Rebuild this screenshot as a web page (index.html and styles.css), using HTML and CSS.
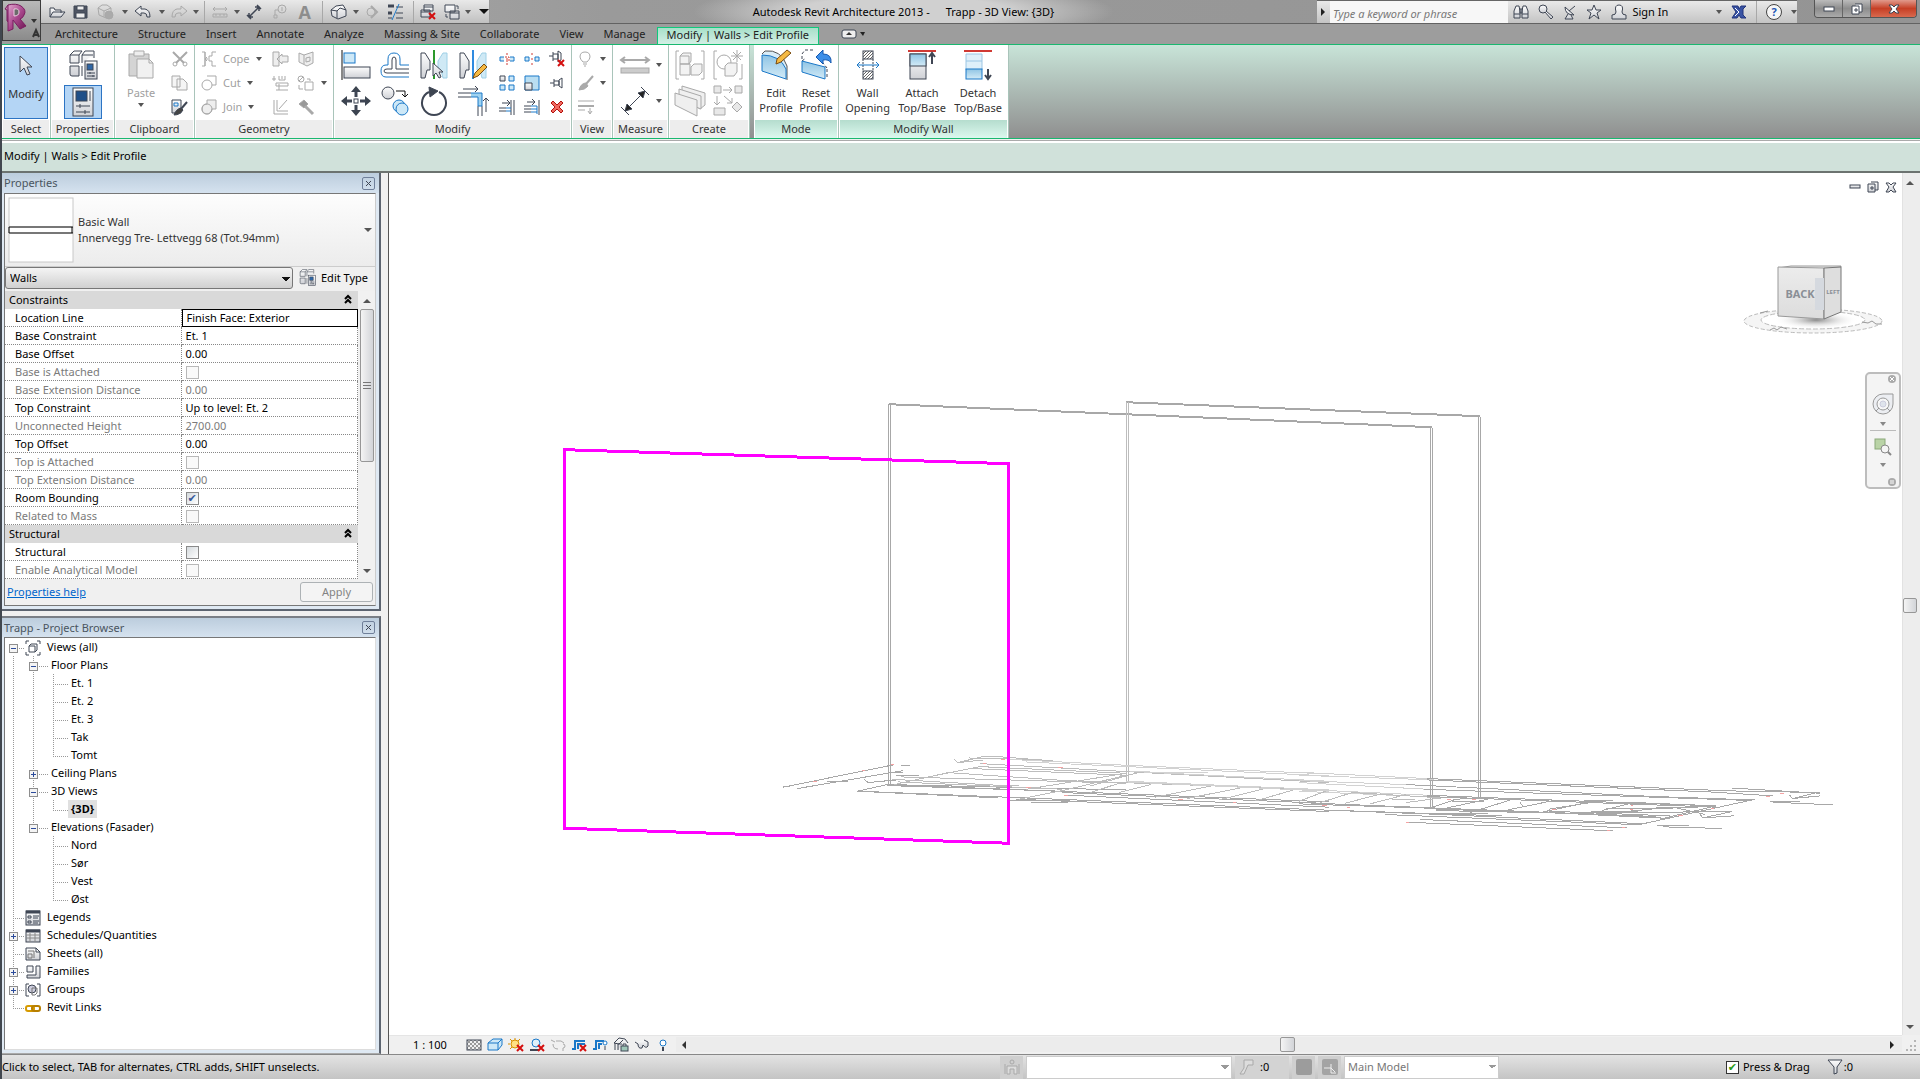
FILE: index.html
```html
<!DOCTYPE html>
<html lang="en">
<head>
<meta charset="utf-8">
<title>Autodesk Revit Architecture 2013 - Trapp - 3D View: {3D}</title>
<link rel="stylesheet" href="styles.css">
</head>
<body>
<svg class="defs" width="0" height="0" aria-hidden="true">
  <defs>
    <linearGradient id="face" x1="0" y1="0" x2="0" y2="1"><stop offset="0" stop-color="#ececec"/><stop offset="1" stop-color="#dcdcdc"/></linearGradient>
    <linearGradient id="glass" x1="0" y1="0" x2="0" y2="1"><stop offset="0" stop-color="#8fc4e4"/><stop offset="1" stop-color="#d3ebf7"/></linearGradient>
    <linearGradient id="metal" x1="0" y1="0" x2="0" y2="1"><stop offset="0" stop-color="#fdfdfd"/><stop offset="1" stop-color="#cfd1d6"/></linearGradient>
    <linearGradient id="rlogo" x1="0" y1="0" x2="1" y2="1"><stop offset="0" stop-color="#e2a6cf"/><stop offset=".5" stop-color="#a8478c"/><stop offset="1" stop-color="#6a1450"/></linearGradient>
    <radialGradient id="shade"><stop offset="0" stop-color="#8a8a8a"/><stop offset="1" stop-color="#fff" stop-opacity="0"/></radialGradient>
    <pattern id="hatch" width="3" height="3" patternUnits="userSpaceOnUse"><path d="M0 3L3 0" stroke="#666" stroke-width="1"/></pattern>
    <pattern id="check" width="4" height="4" patternUnits="userSpaceOnUse"><path d="M0 0h2v2h-2zM2 2h2v2h-2z" fill="#9a9a9a" stroke="none"/></pattern>
    <symbol id="cubes" viewBox="0 0 30 30">
      <path class="m" d="M2 5l4-4h8l-3 4v8H2zM14 5l3-4h9v7M14 13V5h11M2 5h9M2 16h9v10H4q-2 0-2-2zM14 16v10"/>
      <rect class="m" x="17" y="11" width="12" height="18"/><rect x="19" y="14" width="6" height="6" fill="#2f66a5"/><path d="M19 23h8M19 26h8M22 22v2M25 25v2"/>
    </symbol>
    <symbol id="redx" viewBox="0 0 8 8"><path class="r" d="M1 1l6 6M7 1L1 7"/></symbol>
  </defs>
</svg>
<div class="app">
<header class="top">
  <button class="appmenu" aria-label="Application menu">
    <svg width="38" height="40" viewBox="0 0 38 40"><path d="M2 8L5 4l4 2v17l-5-3V9z" fill="url(#rlogo)" stroke="#7b1d60"/><path d="M5 4q8-2 13 1 6 4 3 9-1 3-4 4l6 7-6 3-7-9v9l-5 2V8z" fill="url(#rlogo)" stroke="#7b1d60"/><path d="M11 8q5-1 5 3 0 4-5 4z" fill="#6b6b6b" stroke="#f0cde5"/><path d="M28 18h6l-3 4z" fill="#333" stroke="none"/><path d="M30 36l3-7 3 7M31 34h4" stroke="#333" stroke-width="2"/></svg>
  </button>
  <div class="titlebar">
    <div class="qat">
      <button class="w32" aria-label="Open"><svg width="18" height="14" viewBox="0 0 18 14"><path class="m" d="M2 12V3h4l1 2h6v3M2 12l3-5h12l-4 5z"/></svg></button>
      <button class="w20" aria-label="Save"><svg width="16" height="14" viewBox="0 0 16 14"><path d="M1 1h13v12H1z" fill="#4f5563"/><path d="M4 1h7v4H4z" fill="#eee"/><path d="M3 8h9v5H3z" fill="#eee"/></svg></button>
      <button class="w32 g" aria-label="Synchronize"><svg width="18" height="16" viewBox="0 0 18 16"><path d="M1 4l4-3h5l4 3v7l-5 3-7-3zM1 4l6 3 7-3M7 7v6"/><circle cx="12" cy="11" r="4" fill="#aaa"/></svg></button><i class="caret"></i>
      <button class="w32" aria-label="Undo"><svg width="18" height="14" viewBox="0 0 18 14"><path class="m" d="M1 6l6-5v3h4q5 1 5 8h-3q0-4-3-4H7v3z"/></svg></button><i class="caret"></i>
      <button class="w28 g" aria-label="Redo"><svg width="18" height="14" viewBox="0 0 18 14"><path d="M17 6l-6-5v3H7q-5 1-5 8h3q0-4 3-4h3v3z"/></svg></button><i class="caret"></i><i class="sep"></i>
      <button class="w28 g" aria-label="Measure"><svg width="16" height="12" viewBox="0 0 16 12"><path d="M1 3h14M3 1L1 3l2 2M13 1l2 2-2 2M1 8h14v3H1zM4 8v2M8 8v2M12 8v2"/></svg></button><i class="caret"></i>
      <button class="w28" aria-label="Aligned dimension"><svg width="16" height="16" viewBox="0 0 16 16"><path d="M3 13L13 3M1 11l4 4M11 1l4 4M3 9v4h4M9 3h4v4" stroke-width="1.5"/></svg></button>
      <button class="w24 g" aria-label="Tag"><svg width="15" height="15" viewBox="0 0 15 15"><circle cx="9" cy="5" r="4"/><path d="M9 3v4M5 6H2v5M1 11h3v3H1z"/></svg></button>
      <button class="w24 big-a" aria-label="Text">A</button><i class="sep"></i>
      <button class="w28" aria-label="Default 3D view"><svg width="17" height="16" viewBox="0 0 17 16"><path class="m" d="M1 6l5-4 7-1 3 5v6l-8 3-6-3zM1 6l6 1 3-3 6 2M7 7v7"/></svg></button><i class="caret"></i>
      <button class="w24 g" aria-label="Section"><svg width="14" height="14" viewBox="0 0 14 14"><circle cx="7" cy="7" r="4"/><path d="M7 1l6 6-6 6" stroke-width="2"/></svg></button>
      <button class="w24" aria-label="Thin lines"><svg width="17" height="16" viewBox="0 0 17 16"><path d="M1 2h6M1 9h4" stroke-width="3"/><path d="M1 14h4M9 3h7M9 9h7M9 14h7"/><path class="b" d="M12 0L5 16"/></svg></button><i class="sep"></i>
      <button class="w24" aria-label="Close hidden windows"><svg width="16" height="16" viewBox="0 0 16 16"><path class="m" d="M4 1h9v6H4zM1 6h9v7H1zM4 3h9M1 8h9"/><use href="#redx" x="8" y="8" width="8" height="8"/></svg></button>
      <button class="w24" aria-label="Switch windows"><svg width="17" height="16" viewBox="0 0 17 16"><path class="m" d="M1 1h10v7H1zM6 7h9v8H6zM6 9h9M14 5V2h-2M2 10v3h2"/></svg></button><i class="caret"></i>
      <i class="caret dark"></i>
    </div>
    <h1 class="title"><span>Autodesk Revit Architecture 2013 -</span><span>Trapp - 3D View: {3D}</span></h1>
    <div class="info">
      <i class="tri-r"></i>
      <input class="search" type="text" placeholder="Type a keyword or phrase" aria-label="Search">
      <button aria-label="Find"><svg width="16" height="16" viewBox="0 0 16 16"><path class="m" d="M3 2h3l1 5v7H1V7zM10 2h3l2 5v7H9V7zM7 5h2v4H7zM1 10h6M9 10h6"/></svg></button>
      <button aria-label="Key"><svg width="16" height="16" viewBox="0 0 16 16"><circle class="m" cx="5" cy="5" r="4"/><path class="m" d="M7 8l6 7 2-2-7-6"/></svg></button>
      <button aria-label="Communication center"><svg width="14" height="16" viewBox="0 0 14 16"><path class="m" d="M2 3q0 8 9 8zM6 7l6-5M5 10l-3 5h8l-2-4"/></svg></button>
      <button aria-label="Favorites"><svg width="16" height="16" viewBox="0 0 16 16"><path class="m" d="M8 1l2 5h5l-4 3 2 6-5-4-5 4 2-6-4-3h5z"/></svg></button>
      <button class="signin"><svg width="16" height="16" viewBox="0 0 16 16"><path class="m" d="M5 8Q3 1 8 1t3 7q0 3 4 3v4H1v-4q4 0 4-3z"/></svg><span>Sign In</span><i class="caret"></i></button>
      <button aria-label="Exchange apps"><svg width="16" height="14" viewBox="0 0 16 14"><path d="M1 1h6l1 3 2-3h5l-3 3v6l3 3h-5l-2-3-2 3H1l4-6z" fill="#3953a4" stroke="#22357c"/><path d="M4 3l4 4-4 4" stroke="#fff"/></svg></button>
      <i class="sep"></i>
      <button class="help" aria-label="Help">?</button><i class="caret"></i>
    </div>
    <div class="winbtns">
      <button aria-label="Minimize"><svg width="12" height="6" viewBox="0 0 12 6"><rect x="1" y="1" width="10" height="4" fill="#fff"/></svg></button>
      <button aria-label="Restore"><svg width="12" height="12" viewBox="0 0 12 12"><path d="M4 1h7v8H8M1 3h7v8H1zM4 6h2v2H4z" fill="#fff"/></svg></button>
      <button class="close" aria-label="Close"><svg width="12" height="10" viewBox="0 0 12 10"><path d="M1 1h3l2 2 2-2h3L8 5l3 4H8L6 7 4 9H1l3-4z" fill="#fff"/></svg></button>
    </div>
  </div>
  <nav class="tabs">
    <a href="#">Architecture</a><a href="#">Structure</a><a href="#">Insert</a><a href="#">Annotate</a><a href="#">Analyze</a><a href="#">Massing &amp; Site</a><a href="#">Collaborate</a><a href="#">View</a><a href="#">Manage</a><a href="#" class="active">Modify | Walls &gt; Edit Profile</a>
    <button class="mini" aria-label="Minimize ribbon"><svg width="26" height="10" viewBox="0 0 26 10"><rect x="1" y="1" width="14" height="8" rx="2" fill="#eee"/><path d="M5 6l3-3 3 3z" fill="#333" stroke="none"/><path d="M19 3h5l-2 4z" fill="#222" stroke="none"/></svg></button>
  </nav>
</header>

<section class="ribbon">
  <div class="panel p-select"><div class="body"><button class="tool on tall"><svg width="14" height="22" viewBox="0 0 14 22"><path class="m" d="M1 1v16l4-4 3 7 3-1-3-7h5z"/></svg><span>Modify</span></button></div><h2>Select</h2></div>
  <div class="panel p-prop"><div class="body two">
    <button aria-label="Type properties"><svg width="30" height="30"><use href="#cubes"/></svg></button>
    <button class="on" aria-label="Properties"><svg width="22" height="30" viewBox="0 0 22 30"><rect class="m" x="1" y="1" width="20" height="28"/><rect x="4" y="4" width="11" height="10" fill="#1f4f88"/><path d="M18 4v10M4 19h14M4 25h14M8 17v4M13 23v4"/></svg></button></div><h2>Properties</h2></div>
  <div class="panel p-clip g"><div class="body">
    <button class="tool"><svg width="26" height="32" viewBox="0 0 26 32"><path d="M1 5h20v22H1z" fill="#d4d4d4"/><path d="M6 2h10v5H6z" fill="#eee"/><path d="M9 10h12l4 4v15H9z" fill="#f1f1f1"/><path d="M21 10v4h4"/></svg><span>Paste</span><i class="caret"></i></button>
    <div class="col3">
      <button aria-label="Cut"><svg width="16" height="16" viewBox="0 0 16 16"><path d="M1 1l11 11M15 1L4 12" stroke-width="2"/><circle cx="3" cy="13" r="2"/><circle cx="13" cy="13" r="2"/></svg></button>
      <button aria-label="Copy"><svg width="17" height="16" viewBox="0 0 17 16"><path d="M1 1h8v11H1zM6 4h6l4 4v7H6z" fill="#f5f5f5"/></svg></button>
      <button aria-label="Match type"><svg class="dk" width="17" height="17" viewBox="0 0 17 17"><path class="m" d="M1 1h9v13H1z"/><path class="b" d="M3 4h4v3H3z"/><path d="M16 3l-6 7" stroke-width="2"/><path d="M10 9q-5 1-7 7 6 0 9-5z" fill="#444"/></svg></button>
    </div></div><h2>Clipboard</h2></div>
  <div class="panel p-geo g"><div class="body">
    <div class="col3 left">
      <button><svg width="16" height="16" viewBox="0 0 16 16"><path d="M1 1h3v14H1M4 1v14M15 1h-4v4H8v5h3v5h4M7 8H4l2-2M4 8l2 2"/></svg><span>Cope</span><i class="caret"></i></button>
      <button><svg width="16" height="16" viewBox="0 0 16 16"><path d="M6 1h9v9h-4"/><circle cx="6" cy="10" r="5"/></svg><span>Cut</span><i class="caret"></i></button>
      <button><svg width="16" height="16" viewBox="0 0 16 16"><path d="M6 1h9v9h-4q-1 5-5 5-5 0-5-5t5-5z" fill="#eee"/><circle cx="6" cy="10" r="5"/></svg><span>Join</span><i class="caret"></i></button>
    </div>
    <div class="grid6">
      <button aria-label="Unjoin"><svg width="17" height="16" viewBox="0 0 17 16"><path d="M1 1h6v14H1zM16 5h-6V3L5 8l5 5v-2h6z" fill="#eee"/></svg></button>
      <button aria-label="Wall joins"><svg width="16" height="16" viewBox="0 0 16 16"><path d="M1 2l5 2 9-3v11l-6 3-8-4zM6 4v9M8 7l4-1v4l-4 1z" fill="#eee"/></svg></button>
      <button aria-label="Beam joins"><svg width="17" height="16" viewBox="0 0 17 16"><path d="M2 1v5M0 4h4M7 1v4h6V1M10 1v3M4 8h12v3H4zM4 15h12M7 9v6"/></svg></button>
      <button aria-label="Split face"><svg width="17" height="16" viewBox="0 0 17 16"><circle cx="4" cy="4" r="3"/><path d="M2 6l4-4M8 7h8v8H8zM2 10v4h4M10 4h3v2"/></svg></button>
      <button aria-label="Trim"><svg width="17" height="16" viewBox="0 0 17 16"><path d="M2 1v14h14M5 1v11h11M7 10l8-9"/></svg></button>
      <button aria-label="Demolish"><svg width="16" height="16" viewBox="0 0 16 16"><path d="M1 5l5-4 4 4-4 4z" fill="#999"/><path d="M7 7l8 8" stroke-width="3"/></svg></button>
    </div><i class="caret"></i></div><h2>Geometry</h2></div>
  <div class="panel p-mod"><div class="body">
    <div class="grid8">
      <button aria-label="Align"><svg width="30" height="30" viewBox="0 0 30 30"><path d="M1 0v30" stroke="#111"/><rect x="3" y="3" width="11" height="10" fill="#cde8f7" class="b"/><rect class="m" x="3" y="17" width="26" height="11"/></svg></button>
      <button aria-label="Offset"><svg width="30" height="28" viewBox="0 0 30 28"><path class="b" d="M29 14h-9V8q0-6-6-6T8 8v6H6q-5 0-5 6t5 6h23"/><path d="M29 18h-13V9q0-3-2-3t-2 3v9H7q-3 0-3 2t3 2h22"/></svg></button>
      <button aria-label="Mirror pick axis"><svg width="28" height="30" viewBox="0 0 28 30"><path class="m" d="M1 3h4l5 8v9H7l-2 8H1z"/><path d="M27 3h-4l-5 8v9h3l2 8h4z" fill="#cfe9f5" stroke="#9fd0e6"/><path d="M14 0v29" stroke="#2c9a2c" stroke-width="2"/><path class="m" d="M13 13v13l3-3 3 5 2-1-2-5h4z"/></svg></button>
      <button aria-label="Mirror draw axis"><svg width="28" height="30" viewBox="0 0 28 30"><path class="m" d="M1 3h4l5 8v9H7l-2 8H1z"/><path d="M27 3h-4l-5 8v9h3l2 8h4z" fill="#cfe9f5" stroke="#9fd0e6"/><path d="M14 0v29" stroke="#2f8be0" stroke-width="2"/><path d="M14 28l2-5 9-9 3 3-9 9z" fill="#f5b942" stroke="#7a4b10"/></svg></button>
      <button aria-label="Move"><svg width="30" height="30" viewBox="0 0 30 30"><path d="M15 0l5 6H10zM15 30l-5-6h10zM0 15l6-5v10zM30 15l-6 5V10z" fill="#3c4450" stroke="none"/><path d="M15 5v6M15 19v6M5 15h6M19 15h6" stroke-width="3"/><rect x="13" y="13" width="4" height="4"/></svg></button>
      <button aria-label="Copy element"><svg width="28" height="30" viewBox="0 0 28 30"><circle class="m" cx="7" cy="7" r="6"/><path d="M15 5h9v6M21 8l3 3 3-3" stroke="#111"/><circle class="b" cx="18" cy="20" r="6" fill="#cde8f7"/><circle class="b" cx="21" cy="23" r="6" fill="#cde8f7"/></svg></button>
      <button aria-label="Rotate"><svg width="28" height="30" viewBox="0 0 28 30"><path d="M19 6A12 12 0 1 1 9 6" stroke-width="2"/><path d="M9 1l9 4-8 6z" fill="#3c4450"/></svg></button>
      <button aria-label="Trim extend"><svg width="30" height="30" viewBox="0 0 30 30"><path d="M5 3h15M17 0l3 3-3 3M0 7h13M0 11h13M28 26V12M25 15l3-3 3 3M20 20v10M24 20v10"/><path class="b" d="M13 7h11v13h-4v-9h-7" fill="#9fd2ef"/></svg></button>
    </div>
    <div class="grid9">
      <button aria-label="Split element"><svg width="16" height="12" viewBox="0 0 16 12"><path class="b" d="M5 4H1v4h4M11 4h4v4h-4" fill="#cde8f7"/><path class="rr" d="M6 4h4v4H6M8 0v2M8 5v2M8 10v2" stroke-dasharray="2 1"/></svg></button>
      <button aria-label="Split with gap"><svg width="16" height="12" viewBox="0 0 16 12"><path class="b" d="M1 4h4v4H1zM11 4h4v4h-4z" fill="#cde8f7"/><path class="rr" d="M8 0v2M8 5v2M8 10v2"/></svg></button>
      <button aria-label="Unpin"><svg width="16" height="16" viewBox="0 0 16 16"><path d="M0 5h4M4 1v9M4 3h5v5H4M9 0l3 2v7l-3 2z"/><use href="#redx" x="8" y="8" width="8" height="8"/></svg></button>
      <button aria-label="Array"><svg width="16" height="16" viewBox="0 0 16 16"><path class="m" d="M1 1h5v5H1z"/><path class="b" d="M10 1h5v5h-5zM1 10h5v5H1zM10 10h5v5h-5z" fill="#cde8f7"/></svg></button>
      <button aria-label="Scale"><svg width="16" height="16" viewBox="0 0 16 16"><path class="b" d="M1 1h14v14H1z" fill="#b9def2"/><path class="m" d="M1 8h7v7H1z"/></svg></button>
      <button aria-label="Pin"><svg width="14" height="12" viewBox="0 0 14 12"><path d="M0 6h4M4 2v8M4 4h5v4H4M9 3l3-2v10l-3-2z"/></svg></button>
      <button aria-label="Trim single"><svg width="16" height="16" viewBox="0 0 16 16"><path d="M3 4h7M8 1l3 3-3 3M0 9h7M0 12h7M12 1v15M15 1v15"/><path class="b" d="M7 9h5M7 12h5"/></svg></button>
      <button aria-label="Trim multiple"><svg width="16" height="16" viewBox="0 0 16 16"><path d="M3 3h7M8 0l3 3-3 3M0 7h7M0 10h7M0 13h7M15 1v15"/><path class="b" d="M7 7h6v8M7 10h6M7 13h6"/></svg></button>
      <button aria-label="Delete"><svg width="14" height="14" viewBox="0 0 14 14"><path d="M1 3l2-2 4 4 4-4 2 2-4 4 4 4-2 2-4-4-4 4-2-2 4-4z" fill="#f06a62" stroke="#b3120c"/></svg></button>
    </div></div><h2>Modify</h2></div>
  <div class="panel p-view g"><div class="body"><div class="col3 left">
      <button aria-label="Hide"><svg width="16" height="16" viewBox="0 0 16 16"><path d="M5 11q-3-3-3-5 0-5 5-5t5 5q0 2-3 5zM5 13h4M6 15h2"/></svg><i class="caret"></i></button>
      <button aria-label="Override"><svg width="16" height="16" viewBox="0 0 16 16"><path d="M15 1L8 9" stroke-width="2"/><path d="M8 8q-5 0-7 7 6 0 9-4z" fill="#aaa"/></svg><i class="caret"></i></button>
      <button aria-label="Linework"><svg width="16" height="16" viewBox="0 0 16 16"><path d="M0 2h16"/><path d="M0 7h16" stroke-width="2"/><path d="M0 11h7M12 9v5M10 12l2 3 2-3"/></svg></button>
    </div></div><h2>View</h2></div>
  <div class="panel p-meas"><div class="body two"><button class="g" aria-label="Measure"><svg width="30" height="18" viewBox="0 0 30 18"><path d="M1 4h28M5 1L1 4l4 3M25 1l4 3-4 3" stroke-width="2"/><rect x="1" y="12" width="28" height="5" fill="#ccc"/></svg><i class="caret"></i></button>
    <button aria-label="Dimension"><svg width="30" height="30" viewBox="0 0 30 30"><path d="M5 25L25 5M1 21l8 8M21 1l8 8"/><path d="M5 25l2-7 5 5zM25 5l-2 7-5-5z" fill="#222"/></svg><i class="caret"></i></button></div><h2>Measure</h2></div>
  <div class="panel p-create g"><div class="body four">
      <button aria-label="Create assembly"><svg width="30" height="30" viewBox="0 0 30 30"><path d="M4 1H1v28h3M26 1h3v28h-3"/><path d="M5 6l3-3h8v8l-2 3H5zM5 14h10v11H5zM16 17l3-3h8v8l-3 3h-8zM5 6h9v8" fill="#f3f3f3"/></svg></button>
      <button aria-label="Create group"><svg width="30" height="30" viewBox="0 0 30 30"><path d="M4 1H1v28h3M29 14v15h-3"/><circle cx="11" cy="12" r="7"/><path d="M12 16l3-3h9v9l-3 4h-9z" fill="#f3f3f3"/><path d="M24 0v12M18 6h12M20 2l8 8M28 2l-8 8"/></svg></button>
      <button aria-label="Create parts"><svg width="32" height="32" viewBox="0 0 32 32"><path d="M8 12V1l23 7v12l-5 4z" fill="#efefef"/><path d="M5 15V4l22 7v13z" fill="#efefef"/><path d="M1 20V8l22 7v16z" fill="#efefef"/></svg></button>
      <button aria-label="Create similar"><svg width="30" height="32" viewBox="0 0 30 32"><path d="M1 1h7v7H1zM22 1h7v7h-7zM1 23h11v7H1zM24 17l5 5-5 5-5-5z" fill="#e8e8e8"/><path d="M10 5h9M16 2l3 3-3 3M4 11v9M1 17l3 3 3-3M11 11l8 7M19 13v5h-5"/></svg></button>
    </div><h2>Create</h2></div>
  <div class="panel p-mode ctx"><div class="body row">
    <button class="tool"><svg width="30" height="32" viewBox="0 0 30 32"><path d="M1 5l3-3q16-2 22 15v14" fill="#d9ecf6" stroke="#555"/><path class="b" d="M1 6q18 0 24 14v10L1 22z" fill="url(#glass)"/><path d="M15 15l1-5L26 1l4 3-10 9z" fill="#f5b942" stroke="#7a4b10"/></svg><span>Edit<br>Profile</span></button>
    <button class="tool"><svg width="30" height="32" viewBox="0 0 30 32"><path d="M1 10V5l3-4h10M1 12l4-3M18 9l8 10M26 20v10" stroke-dasharray="3 2"/><path class="b" d="M1 12l23 6v12L1 23z" fill="url(#glass)"/><path d="M15 8l7-7v4q9 0 8 9-2-4-8-3v4z" fill="#3d8fe8" stroke="#1559b0"/></svg><span>Reset<br>Profile</span></button>
  </div><h2>Mode</h2></div>
  <div class="panel p-wall ctx"><div class="body row">
    <button class="tool"><svg width="24" height="32" viewBox="0 0 24 32"><rect x="7" y="2" width="10" height="8" fill="url(#hatch)"/><rect x="7" y="22" width="10" height="8" fill="url(#hatch)"/><path d="M7 10v12M17 10v12" stroke-dasharray="2 1"/><path class="b" d="M1 16h22M4 13l-3 3 3 3M20 13l3 3-3 3"/></svg><span>Wall<br>Opening</span></button>
    <button class="tool"><svg width="28" height="32" viewBox="0 0 28 32"><path class="rr" d="M0 2h28" stroke-width="2"/><rect class="m" x="2" y="5" width="16" height="25"/><rect x="2" y="5" width="16" height="12" fill="url(#glass)"/><path d="M24 15V5M21 8l3-4 3 4" stroke-width="2"/></svg><span>Attach<br>Top/Base</span></button>
    <button class="tool"><svg width="28" height="32" viewBox="0 0 28 32"><path class="rr" d="M0 2h28" stroke-width="2"/><path d="M2 5h16v16H2zM2 12h16" fill="#dff0fa" stroke="#9cc6e4"/><rect class="b" x="2" y="20" width="16" height="10" fill="url(#glass)"/><path d="M24 20v9M21 26l3 4 3-4" stroke-width="2"/></svg><span>Detach<br>Top/Base</span></button>
  </div><h2>Modify Wall</h2></div>
</section>
<div class="options">Modify | Walls &gt; Edit Profile</div>

<main class="work">
  <aside class="dock">
    <section class="pane props">
      <h2>Properties<button class="x" aria-label="Close properties"><svg width="7" height="7" viewBox="0 0 7 7"><path d="M1 1l5 5M6 1L1 6"/></svg></button></h2>
      <div class="inner">
        <button class="type"><svg width="66" height="66" viewBox="0 0 66 66"><rect x="1" y="1" width="64" height="64" fill="#fff" stroke="#c8c8c8"/><rect x="2" y="30" width="62" height="6" fill="#fff" stroke="none"/><path d="M1 30h64M1 36h64" stroke="#777" stroke-width="2"/><path d="M1 30v6M64 30v6" stroke="#000"/></svg><span>Basic Wall<br>Innervegg Tre- Lettvegg 68 (Tot.94mm)</span><i class="caret big"></i></button>
        <div class="filter"><select aria-label="Element filter"><option>Walls</option></select><button><svg width="17" height="17"><use href="#cubes"/></svg>Edit Type</button></div>
        <div class="scroller">
          <table>
            <tr class="grp"><th colspan="2">Constraints<svg width="8" height="10" viewBox="0 0 8 10"><path d="M1 4l3-3 3 3M1 8l3-3 3 3"/></svg></th></tr>
            <tr><th>Location Line</th><td class="sel">Finish Face: Exterior</td></tr>
            <tr><th>Base Constraint</th><td>Et. 1</td></tr>
            <tr><th>Base Offset</th><td>0.00</td></tr>
            <tr class="off"><th><label for="c1">Base is Attached</label></th><td><input id="c1" type="checkbox" disabled></td></tr>
            <tr class="off"><th>Base Extension Distance</th><td>0.00</td></tr>
            <tr><th>Top Constraint</th><td>Up to level: Et. 2</td></tr>
            <tr class="off"><th>Unconnected Height</th><td>2700.00</td></tr>
            <tr><th>Top Offset</th><td>0.00</td></tr>
            <tr class="off"><th><label for="c2">Top is Attached</label></th><td><input id="c2" type="checkbox" disabled></td></tr>
            <tr class="off"><th>Top Extension Distance</th><td>0.00</td></tr>
            <tr><th><label for="c3">Room Bounding</label></th><td><input id="c3" type="checkbox" checked></td></tr>
            <tr class="off"><th><label for="c4">Related to Mass</label></th><td><input id="c4" type="checkbox" disabled></td></tr>
            <tr class="grp"><th colspan="2">Structural<svg width="8" height="10" viewBox="0 0 8 10"><path d="M1 4l3-3 3 3M1 8l3-3 3 3"/></svg></th></tr>
            <tr><th><label for="c5">Structural</label></th><td><input id="c5" type="checkbox"></td></tr>
            <tr class="off"><th><label for="c6">Enable Analytical Model</label></th><td><input id="c6" type="checkbox" disabled></td></tr>
          </table>
          <div class="vbar"><i class="tri-u"></i><div class="thumb"></div><i class="tri-d"></i></div>
        </div>
        <div class="foot"><a href="#">Properties help</a><button disabled>Apply</button></div>
      </div>
    </section>
    <section class="pane browser">
      <h2>Trapp - Project Browser<button class="x" aria-label="Close browser"><svg width="7" height="7" viewBox="0 0 7 7"><path d="M1 1l5 5M6 1L1 6"/></svg></button></h2>
      <ul class="tree">
        <li><i class="c first"><b></b></i><svg width="16" height="16" viewBox="0 0 16 16"><path d="M4 1H1v3M12 1h3v3M4 15H1v-3M12 15h3v-3M4 6l2-2h6v6l-2 2H4zM4 6h6v6"/></svg><span>Views (all)</span></li>
        <li><i class="c v"></i><i class="c t w"><b></b></i><span>Floor Plans</span></li>
        <li><i class="c v"></i><i class="c v"></i><i class="c t w"></i><span>Et. 1</span></li>
        <li><i class="c v"></i><i class="c v"></i><i class="c t w"></i><span>Et. 2</span></li>
        <li><i class="c v"></i><i class="c v"></i><i class="c t w"></i><span>Et. 3</span></li>
        <li><i class="c v"></i><i class="c v"></i><i class="c t w"></i><span>Tak</span></li>
        <li><i class="c v"></i><i class="c v"></i><i class="c l w"></i><span>Tomt</span></li>
        <li><i class="c v"></i><i class="c t w"><b class="plus"></b></i><span>Ceiling Plans</span></li>
        <li><i class="c v"></i><i class="c t w"><b></b></i><span>3D Views</span></li>
        <li><i class="c v"></i><i class="c v"></i><i class="c l w"></i><span class="cur">{3D}</span></li>
        <li><i class="c v"></i><i class="c l w"><b></b></i><span>Elevations (Fasader)</span></li>
        <li><i class="c v"></i><i class="c"></i><i class="c t w"></i><span>Nord</span></li>
        <li><i class="c v"></i><i class="c"></i><i class="c t w"></i><span>Sør</span></li>
        <li><i class="c v"></i><i class="c"></i><i class="c t w"></i><span>Vest</span></li>
        <li><i class="c v"></i><i class="c"></i><i class="c l w"></i><span>Øst</span></li>
        <li><i class="c t"></i><svg width="16" height="16" viewBox="0 0 16 16"><rect class="m" x="1" y="1" width="14" height="14"/><path d="M1 2h14" stroke-width="3"/><path d="M3 6h3v2H3zM3 11h3v2H3zM8 6h6M8 8h5M8 11h6M8 13h5"/></svg><span>Legends</span></li>
        <li><i class="c t"><b class="plus"></b></i><svg width="16" height="16" viewBox="0 0 16 16"><rect class="m" x="1" y="2" width="14" height="12"/><path d="M1 3h14" stroke-width="3"/><path d="M1 7h14M1 10h14M5 5v9M10 5v9" stroke="#888"/></svg><span>Schedules/Quantities</span></li>
        <li><i class="c t"></i><svg width="16" height="16" viewBox="0 0 16 16"><path class="m" d="M1 2h10l4 4v8H1zM11 2v4h4"/><path d="M3 5h6v7M3 8h4v4H3z" stroke="#777"/></svg><span>Sheets (all)</span></li>
        <li><i class="c t"><b class="plus"></b></i><svg width="16" height="16" viewBox="0 0 16 16"><path class="m" d="M2 2h6v6H2zM11 2h4v12H2v-3h9z"/></svg><span>Families</span></li>
        <li><i class="c t"><b class="plus"></b></i><svg width="16" height="16" viewBox="0 0 16 16"><path d="M4 2H1v12h3M12 2h3v12h-3"/><circle cx="7" cy="7" r="4" fill="#ccd"/><path d="M7 6h5v5l-2 2H7z" stroke="#777"/></svg><span>Groups</span></li>
        <li><i class="c l"></i><svg width="16" height="16" viewBox="0 0 16 16"><rect x="1" y="6" width="8" height="5" rx="2" stroke="#d69a00" stroke-width="2"/><rect x="7" y="6" width="8" height="5" rx="2" stroke="#b87f00" stroke-width="2"/></svg><span>Revit Links</span></li>
      </ul>
    </section>
  </aside>

  <section class="view">
    <div class="canvas">
      <svg class="model" viewBox="389 173 1513 863" preserveAspectRatio="xMinYMin meet" shape-rendering="crispEdges">
        <g stroke="#a8a8a8">
          <path d="M889 404V785M891 404V785M890 404L1433 427M890 405L1433 428M1432 428V808M1434 428V808M1480 417V798M1482 417V798M1127 402L1481 416M1127 403L1481 417"/>
          <path d="M1127 402V783M1129 402V783" stroke="#bdbdbd"/>
        </g>
        <g class="site" transform="translate(770 740) scale(.357 .333)">
          <path d="M38 144L350 76M78 148L375 94M370 79h25M160 128h60M38 143h20M264 118l12 12 56-6M276 130l80-8M246 156L330 136L1000 152M246 156L640 176M330 136L1568 188M330 139L820 156M344 160L1568 213M690 180L1568 217M732 190h104M775 183h60M672 184h170M820 160L1568 193M835 168L1568 204M355 108L420 108M340 100h34M246 156h60"/>
          <path stroke="#bdbdbd" d="M516 58l12 12 65-17h60L795 65M528 70L600 62M560 56L795 63M590 73L1568 130M590 82L1000 102M570 88L1000 108M500 100L830 124L1568 152M370 113L1000 132M360 128L820 150M344 120L670 140M450 112L590 82M350 136L500 100M720 150L1000 102M700 180L830 152M815 156L1000 108M900 140L1040 98M900 160L980 132M980 160L1070 136M1080 174L1240 140M1170 178L1320 146M1260 182L1390 148M1360 186L1470 152M640 140h60"/>
          <path stroke="#d2d2d2" d="M670 60L1000 78M720 68L1568 110M1000 78L1568 104M1010 96L1568 126M1050 98L1230 100M1000 126L1568 152M1000 128L1568 156"/>
          <path stroke="#f4a3a3" d="M122 127h12M260 94h8M340 76h10M598 73h10M650 62h10M810 85h14M720 146h14M825 168h12M1146 182h14M1300 190h8M1550 199h12"/>
        </g>
        <g class="site" transform="translate(1300 740) scale(.357 .333)">
          <path stroke="#d2d2d2" d="M0 99L360 118M0 108L380 122M0 124L300 136M0 130L360 150M0 150L360 168M0 156L300 170"/>
          <path stroke="#bdbdbd" d="M0 186L75 156M60 190L150 160M130 192L230 164M200 194L300 166M260 182h66M300 190L400 176M150 160L400 176"/>
          <path d="M360 118L1210 155L1460 160M360 122L1150 158L1330 170M300 136L1000 172L1270 182M350 150L1270 184M360 168L500 174L1000 194L1170 200M360 172L1172 204M0 190L370 206L1000 232M0 194L620 216L1040 238M0 210L570 230M60 212L400 226L970 254M240 226L960 257M300 249L880 275M340 241L920 266M385 210L820 224L1040 238M385 214L740 222M1215 149h40L1460 162M1320 187h86M1330 189L1498 197M1376 168l8 10 78-8M1384 178L1460 158M1125 226l8 10 86-6M1133 236L1215 217M1005 260h90M1020 263L1186 268M370 206L440 180L520 176M390 212L530 180M480 220L600 180M586 212L714 184M686 218L834 184M850 214L940 190L1170 200M890 220L1040 204M960 255L1280 180M1020 238L1170 200M620 190l10 14M800 184h80M700 210L830 188M860 208h190M1000 206h120M430 186h90M400 222h130M820 218h130M1050 204L1140 226M700 216L1040 230M740 222L1215 217"/>
          <path stroke="#f4a3a3" d="M64 199h12M136 206h8M300 250h10M415 182h12M486 180h10M710 212h12M930 199h8M928 211h8M1064 230h12M1155 209h8M1310 172h10M1350 163h10M865 275h8M905 266h8"/>
        </g>
        <path d="M565 450L1009 464V844L565 829Z" stroke="#f0f" stroke-width="3"/>
      </svg>
      <div class="mdi">
        <button aria-label="Minimize view"><svg width="12" height="6" viewBox="0 0 12 6"><rect class="m" x="1" y="1" width="10" height="3"/></svg></button>
        <button aria-label="Restore view"><svg width="12" height="12" viewBox="0 0 12 12"><path class="m" d="M4 1h7v8H8M1 3h7v8H1zM4 6h2v2H4z"/></svg></button>
        <button aria-label="Close view"><svg width="12" height="11" viewBox="0 0 12 11"><path class="m" d="M1 1h3l2 2 2-2h3L8 5l3 5H8L6 8l-2 2H1l3-5z"/></svg></button>
      </div>
      <svg class="cube" width="142" height="70" viewBox="0 0 142 70">
        <ellipse cx="71" cy="55" rx="69" ry="12" fill="#f5f5f5" stroke="#bbb" stroke-dasharray="4 2"/>
        <ellipse cx="71" cy="54" rx="52" ry="9" fill="#fff" stroke="#bbb" stroke-dasharray="5 2"/>
        <ellipse cx="74" cy="54" rx="42" ry="9" fill="url(#shade)" stroke="none"/>
        <path d="M28 64l4-2 3 2 4-3 6 2M120 56l6 1 4-2 4 3h6M18 47l8-2" stroke="#999"/>
        <path d="M36 2L49 0h50v1L82 3z" fill="#eee" stroke="#999"/>
        <path d="M36 1L82 2V53L36 50Z" fill="url(#face)" stroke="#999"/>
        <path d="M82 2L99 1V46L82 53Z" fill="#dedede" stroke="#777"/>
        <rect x="73" y="12" width="9" height="32" fill="#d5d9df" stroke="none"/>
        <text x="58" y="32" text-anchor="middle" class="cube-b">BACK</text>
        <text x="91" y="28" text-anchor="middle" class="cube-s">LEFT</text>
      </svg>
      <div class="navbar">
        <button class="nx" aria-label="Close navigation bar"><svg width="8" height="8" viewBox="0 0 8 8"><circle cx="4" cy="4" r="4" fill="#aaa" stroke="none"/><path d="M2 2l4 4M6 2L2 6" stroke="#fff"/></svg></button>
        <button aria-label="Steering wheel"><svg width="22" height="22" viewBox="0 0 22 22"><path d="M11 1h10v10A10 10 0 1 1 11 1z" fill="#eceef2" stroke="#999"/><circle cx="11" cy="11" r="6" fill="#f7f7f7" stroke="#999"/><path d="M4 18l3-3M18 18l-3-3" stroke="#999"/><circle cx="11" cy="11" r="3" fill="#dfe4ec" stroke="#ccd"/></svg></button>
        <i class="caret"></i><hr>
        <button aria-label="Zoom"><svg width="18" height="18" viewBox="0 0 18 18"><rect x="1" y="1" width="10" height="10" fill="#b9d3a6" stroke="#8aa878"/><circle cx="11" cy="11" r="4" fill="#f5f5f5" stroke="#888"/><path d="M14 14l3 3" stroke="#888" stroke-width="2"/></svg></button>
        <i class="caret"></i>
        <button class="nx low" aria-label="Navigation options"><svg width="8" height="8" viewBox="0 0 8 8"><circle cx="4" cy="4" r="4" fill="#aaa" stroke="none"/><path d="M2 3h4M2 5h4" stroke="#fff"/></svg></button>
      </div>
    </div>
    <div class="vscroll"><i class="tri-u"></i><div class="thumb"></div><i class="tri-d"></i></div>
    <div class="vcb">
      <button class="scale">1 : 100</button>
      <button aria-label="Detail level"><svg width="16" height="12" viewBox="0 0 16 12"><rect x="1" y="1" width="14" height="10" fill="url(#check)"/></svg></button>
      <button aria-label="Visual style"><svg width="16" height="13" viewBox="0 0 16 13"><path class="b" d="M1 5l5-4h9v6l-4 5H1zM1 5h10v7M11 5l4-4" fill="#cde8f7"/></svg></button>
      <button aria-label="Sun path"><svg width="16" height="14" viewBox="0 0 16 14"><circle cx="7" cy="6" r="4" fill="#ffe184" stroke="#d89000"/><path d="M7 0v2M0 6h2M2 1l2 2M12 1l-2 2M2 11l2-2" stroke="#d89000"/><use href="#redx" x="8" y="6" width="8" height="8"/></svg></button>
      <button aria-label="Shadows"><svg width="16" height="14" viewBox="0 0 16 14"><path d="M1 12h9" stroke-width="2"/><circle class="b" cx="7" cy="5" r="4" fill="#dff0fa"/><use href="#redx" x="8" y="6" width="8" height="8"/></svg></button>
      <button class="g" aria-label="Rendering"><svg width="16" height="14" viewBox="0 0 16 14"><path d="M1 2l4 2M3 6q0 5 5 5M6 3h5l3 2M13 6a2 2 0 1 1 0 4v3"/></svg></button>
      <button aria-label="Crop view"><svg width="16" height="14" viewBox="0 0 16 14"><path class="b" d="M1 11h3V3h10M7 11V6h7" stroke-width="2"/><use href="#redx" x="8" y="6" width="8" height="8"/></svg></button>
      <button aria-label="Show crop region"><svg width="16" height="14" viewBox="0 0 16 14"><path class="b" d="M1 11h3V3h8M7 11V6h3" stroke-width="2"/><circle class="b" cx="13" cy="5" r="2" fill="#fff"/><path d="M13 8v4"/></svg></button>
      <button aria-label="Locked view"><svg width="16" height="16" viewBox="0 0 16 16"><path class="m" d="M1 6l5-5 6 1 3 4M2 6v7M5 13V7h4M1 6l5 1 4-4"/><rect x="8" y="9" width="7" height="5" fill="#9fc7b9"/><path d="M10 9V7h3v2"/></svg></button>
      <button aria-label="Temporary hide"><svg width="16" height="12" viewBox="0 0 16 12"><path d="M1 3l3 2q0 5 4 4l1-3q3 4 5 1V3l-4-2" class="m"/></svg></button>
      <button aria-label="Reveal hidden"><svg width="16" height="12" viewBox="0 0 16 12"><circle class="b" cx="8" cy="4" r="3" fill="#fff"/><path d="M8 8v4" stroke-width="2"/></svg></button>
      <div class="hscroll"><i class="tri-l"></i><div class="thumb"></div><i class="tri-r"></i></div>
    </div>
    <div class="grip"><svg width="12" height="12" viewBox="0 0 12 12"><path d="M10 1v2M6 6v2M10 6v2M2 10v2M6 10v2M10 10v2" stroke="#b5b5b5" stroke-width="2"/></svg></div>
  </section>
</main>

<footer class="status">
  <p>Click to select, TAB for alternates, CTRL adds, SHIFT unselects.</p>
  <div class="ws">
    <button class="sq g" aria-label="Worksets"><svg width="18" height="16" viewBox="0 0 18 16"><circle cx="9" cy="3" r="2"/><path d="M4 7h10v8h-3v-5H7v5H4zM2 5v10M16 5v10" fill="#ddd"/></svg></button>
    <select class="work-sel" aria-label="Active workset" disabled><option></option></select>
    <button class="req"><svg class="g" width="16" height="16" viewBox="0 0 16 16"><path d="M5 1h9v5H9l-4 9H1l4-6z" fill="#ddd"/></svg>:0</button>
    <button class="sq" aria-label="Design options"><svg width="16" height="16" viewBox="0 0 16 16"><rect width="16" height="16" rx="2" fill="#9c9c9c" stroke="none"/></svg></button>
    <button class="sq" aria-label="Pick to edit"><svg width="16" height="16" viewBox="0 0 16 16"><rect width="16" height="16" rx="2" fill="#a4a4a4" stroke="none"/><path d="M2 9h7l4 4M9 5v9h5" stroke="#eee"/></svg></button>
    <select class="main-sel" aria-label="Design option" disabled><option>Main Model</option></select>
  </div>
  <label class="drag"><input type="checkbox" checked>Press &amp; Drag</label>
  <button class="flt"><svg width="16" height="16" viewBox="0 0 16 16"><path class="m" d="M1 1h14l-5 7v6l-3 1V8z"/></svg>:0</button>
</footer>
</div>
</body>
</html>
```
FILE: styles.css
```css
* { box-sizing: border-box; }
body, h1, h2, p, ul { margin: 0; padding: 0; }
body { font: 11px/16px "Noto Sans", "Open Sans", sans-serif; color: #000; background: #f0f0f0; overflow: hidden; }
button { font: inherit; color: inherit; background: none; border: 0; padding: 0; margin: 0; display: flex; align-items: center; justify-content: center; }
input, select { font: inherit; margin: 0; }
svg { fill: none; stroke: #3f4654; stroke-width: 1; display: block; flex: none; overflow: visible; }
i { font-style: normal; flex: none; }
.defs { position: absolute; }
.m { fill: url(#metal); }
.b { stroke: #1b78c8; }
.r { stroke: #d40f0f; stroke-width: 2; }
.rr { stroke: #d03a34; }
.g svg, svg.g { stroke: #a9a9a9; }
.g svg.dk { stroke: #3f4654; }
.g { color: #a0a0a0; }
.caret { width: 0; height: 0; border: 3px solid transparent; border-top: 4px solid #555; border-bottom: 0; }
.caret.dark { border-width: 5px 5px 0; border-top-color: #111; margin-left: 8px; }
.caret.big { border-width: 4px 4px 0; }
.tri-u, .tri-d, .tri-l, .tri-r { width: 0; height: 0; border: 4px solid transparent; }
.tri-u { border-bottom-color: #555; border-top: 0; }
.tri-d { border-top-color: #555; border-bottom: 0; }
.tri-l { border-right-color: #333; border-left: 0; }
.tri-r { border-left-color: #222; border-right: 0; }
.sep { width: 1px; height: 22px; background: #a8a8a8; margin: 0 2px 0 5px; }

.app { display: flex; flex-direction: column; height: 100vh; border-left: 2px solid #41474f; }

/* title bar and tabs */
.top { display: grid; grid-template-columns: 39px 1fr; grid-template-rows: 24px 20px; background: #9d9d9d; flex: none; }
.appmenu { grid-row: 1 / 3; height: 41px; border: 1px solid #3c3c3c; background: linear-gradient(#b9b9b9, #8b8b8b); }
.titlebar { display: flex; min-width: 0; border-bottom: 1px solid #626262; background: linear-gradient(90deg, #b0b0b0, #9a9a9a 30%, #949494); }
.qat { width: 449px; display: flex; align-items: center; background: linear-gradient(#e9e9e9, #c0c0c0); flex: none; border-right: 1px solid #999; }
.qat .w32 { width: 32px; }
.qat .w28 { width: 28px; }
.qat .w24 { width: 25px; }
.qat .w20 { width: 18px; }
.big-a { font: bold 18px/20px "Open Sans", sans-serif; color: #8d8d8d; }
.title { flex: 1; display: flex; justify-content: center; align-items: center; gap: 16px; font-size: 11px; font-weight: 400; background: radial-gradient(ellipse 210px 30px at center, #d0d0d0 50%, transparent); }
.info { width: 480px; display: flex; align-items: center; gap: 9px; background: linear-gradient(#e9e9e9, #c4c4c4); border-top: 1px solid #666; padding-left: 4px; }
.info .tri-r { margin-right: -4px; }
.search { width: 179px; height: 22px; border: 0; background: #f7f7f7; font-style: italic; padding: 2px 3px 0; }
.search::placeholder { color: #777; opacity: 1; }
.info .search + button { margin-left: -4px; }
.info .sep { margin: 0; }
.signin { width: 111px; gap: 5px; justify-content: flex-start; }
.signin .caret { margin-left: auto; }
.help { width: 16px; height: 16px; border-radius: 8px; border: 1px solid #444; background: #f6f6f6; color: #2456b5; font-weight: 700; }
.winbtns { display: flex; height: 18px; margin: 0 3px 0 17px; border: 1px solid #555; border-top: 0; border-radius: 0 0 4px 4px; overflow: hidden; }
.winbtns button { width: 28px; background: linear-gradient(#bbb, #8d8d8d 50%, #aaa); border-right: 1px solid #666; }
.winbtns .close { width: 45px; background: linear-gradient(#e19a8c, #c63f25 50%, #d9694e); border: 0; }
.tabs { display: flex; padding-left: 4px; align-items: stretch; }
.tabs a { padding: 2px 10px; color: #222; text-decoration: none; white-space: nowrap; }
.tabs .active { background: linear-gradient(#a7e0c9, #d3efe5); border: 1px solid #10c87c; border-bottom: 0; margin: 3px 0 0 1px; padding: 0 9px; line-height: 13px; }
.mini { margin-left: 22px; }

/* ribbon */
.ribbon { display: flex; border-top: 1px solid #19b870; border-bottom: 1px solid #19b870; background: linear-gradient(#c8e4d8, #8f8f8f); height: 95px; flex: none; }
.panel { display: flex; flex-direction: column; background: #fff; border-right: 1px solid #a9c4ba; }
.panel h2 { font-size: 11px; font-weight: 400; line-height: 17px; text-align: center; color: #333; background: #ededed; margin: 0 1px; height: 18px; }
.panel.ctx h2 { background: linear-gradient(#b5ddce, #dcf8ee); }
.body { flex: 1; display: flex; padding: 2px 2px 1px; justify-content: center; }
.tool { flex-direction: column; justify-content: flex-start; padding-top: 2px; line-height: 15px; color: #333; }
.g .tool { color: #a0a0a0; }
.tool svg { margin-bottom: 4px; }
.tool .caret { margin-top: 3px; }
.on { background: #b4d5f5; border: 1px solid #2c74c4; }
.tall { width: 44px; padding-top: 7px; }
.tall svg { margin-bottom: 9px; }
.p-select { width: 49px; }
.p-prop { width: 64px; }
.p-clip { width: 80px; }
.p-geo { width: 139px; }
.p-mod { width: 238px; }
.p-view { width: 41px; }
.p-meas { width: 56px; }
.p-create { width: 81px; }
.p-mode { width: 85px; margin-left: 4px; }
.p-wall { width: 170px; }
.two { display: grid; grid-template-rows: 36px 36px; }
.p-prop .two button { width: 38px; }
.p-prop .two .on { height: 34px; align-self: end; }
.col3 { display: grid; grid-template-rows: repeat(3, 24px); }
.col3.left button { justify-content: flex-start; gap: 6px; }
.p-clip .body { justify-content: space-between; padding: 2px 6px 1px 12px; }
.p-geo .body { justify-content: flex-start; padding-left: 6px; align-items: center; }
.p-geo .col3 { width: 67px; }
.grid6 { display: grid; grid-template: repeat(3, 24px) / 25px 25px; margin-right: 3px; }
.grid8 { display: grid; grid-template: 36px 36px / repeat(4, 39px); margin-right: 2px; }
.grid9 { display: grid; grid-template: repeat(3, 24px) / repeat(3, 25px); }
.p-mod .body { justify-content: flex-start; }
.two button { gap: 6px; }
.four { display: grid; grid-template: 36px 36px / 38px 38px; }
.row button { flex: 1 1 auto; }

.options { border-top: 1px solid #aaa; box-shadow: inset 0 2px #fff; height: 33px; margin-top: 1px; flex: none; padding: 7px 2px 0; background: #d0e1da; border-bottom: 2px solid #6c7370; }

/* docked panes */
.work { flex: 1; min-height: 0; display: flex; gap: 7px; }
.dock { width: 379px; display: flex; flex-direction: column; gap: 5px; flex: none; }
.pane { background: #dfe9f3; border-right: 2px solid #5c6470; border-bottom: 2px solid #5c6470; display: flex; flex-direction: column; padding: 0 3px 3px 2px; }
.pane h2 { font-size: 11px; font-weight: 400; color: #4a5560; height: 20px; line-height: 20px; background: linear-gradient(#bccddd, #d5e2ef); margin: 0 -3px 0 -2px; padding: 0 4px 0 2px; display: flex; justify-content: space-between; align-items: center; }
.x { width: 13px; height: 13px; border: 1px solid #70809a; border-radius: 2px; }
.inner { border: 1px solid #777; border-right-color: #ccc; background: #f0f0f0; }
.browser { flex: 1; border-top: 2px solid #7a7f86; border-bottom: 1px solid #aaa; }
.browser h2 { height: 19px; line-height: 19px; }
.type { width: 100%; height: 73px; background: linear-gradient(#fdfdfd, #ececec); justify-content: flex-start; padding: 0 3px; gap: 4px; text-align: left; color: #333; border-bottom: 1px solid #ccc; }
.type .caret { margin-left: auto; }
.filter { display: flex; height: 24px; align-items: flex-start; }
.filter select { width: 288px; height: 22px; border: 1px solid #777; border-radius: 3px; appearance: none; padding: 0 4px; color: #000; background: conic-gradient(from 315deg at 50% 100%, #111 25%, transparent 0) no-repeat 276px 9px / 8px 4px, linear-gradient(#f4f4f4, #d0d0d0); }
.filter button { gap: 5px; padding-left: 6px; height: 21px; }
.scroller { display: flex; height: 288px; }
table { border-collapse: separate; border-spacing: 0; width: 354px; table-layout: fixed; background: #fff; }
tr { height: 18px; }
th, td { font-weight: 400; text-align: left; padding: 0 4px 1px; height: 18px; line-height: 15px; border-bottom: 1px dotted #888; border-right: 1px dotted #888; white-space: nowrap; }
th { padding-left: 10px; }
.grp th { background: #d9d9d9; padding-left: 4px; border: 0; }
.grp svg { float: right; margin: 3px 2px 0; stroke: #000; stroke-width: 2; }
.sel { border: 1px solid #000; line-height: 14px; }
.off { color: #7b7b7b; }
input[type=checkbox] { appearance: none; width: 13px; height: 13px; border: 1px solid #8a8a8a; background: linear-gradient(135deg, #d5dade, #fff); display: block; margin: 2px 0 0; }
input[type=checkbox]:disabled { border-color: #b8b8b8; background: #f9f9f9; }
input[type=checkbox]:checked::before { content: "✔"; font: 11px/11px "DejaVu Sans", sans-serif; color: #3a5a9c; display: block; text-align: center; }
.vbar { width: 17px; margin-left: auto; display: flex; flex-direction: column; align-items: center; padding: 8px 0 6px; background: #f1f1f1; }
.vbar .thumb { height: 153px; margin: 6px 0 auto; width: 14px; display: grid; place-items: center; }
.thumb { border: 1px solid #979797; border-radius: 2px; background: linear-gradient(90deg, #f4f4f4, #d2d4d8); }
.vbar .thumb::before { content: ""; width: 8px; height: 8px; background: repeating-linear-gradient(#777 0 1px, transparent 1px 3px); }
.foot { height: 26px; display: flex; justify-content: space-between; align-items: center; padding: 0 2px; }
.foot a { color: #0066cc; }
.foot button { width: 73px; height: 20px; border: 1px solid #adb2b5; border-radius: 3px; background: #f4f4f4; color: #838383; }

/* project browser */
.tree { list-style: none; flex: 1; background: #fff; border: 1px solid #777; border-right-color: #ddd; border-bottom-color: #ddd; }
.tree li { display: flex; height: 18px; align-items: center; }
.tree span { padding: 0 3px; line-height: 18px; }
.tree svg { margin-right: 3px; margin-top: 2px; }
.tree .cur { background: #e0e0e0; font-weight: 700; }
.c { --v: repeating-linear-gradient(#999 0 1px, transparent 1px 2px) no-repeat 8px 0; --h: repeating-linear-gradient(90deg, #999 0 1px, transparent 1px 2px) no-repeat 8px 10px / 100% 1px; width: 20px; height: 18px; display: block; padding: 6px 0 0 4px; }
.c.w { width: 23px; }
.c.v { background: var(--v) / 1px 18px; }
.c.t { background: var(--v) / 1px 18px, var(--h); }
.c.l { background: var(--v) / 1px 10px, var(--h); }
.c.first { background: var(--h); }
.c b { display: block; width: 9px; height: 9px; border: 1px solid #8e8e8e; background: linear-gradient(#2b4b9b, #2b4b9b) no-repeat center / 5px 1px, #f4f4f4; }
.c b.plus { background: linear-gradient(#2b4b9b, #2b4b9b) no-repeat center / 5px 1px, linear-gradient(#2b4b9b, #2b4b9b) no-repeat center / 1px 5px, #f4f4f4; }

/* drawing view */
.view { flex: 1; min-width: 0; display: grid; grid-template: 1fr 19px / 1fr 18px; border-left: 1px solid #555; background: #fff; }
.canvas { position: relative; min-width: 0; min-height: 0; overflow: hidden; }
.model { width: 100%; height: 100%; }
.site path { vector-effect: non-scaling-stroke; }
.site { stroke: #a8a8a8; }
.mdi { position: absolute; top: 8px; right: 5px; display: flex; gap: 6px; align-items: center; }
.cube { position: absolute; top: 93px; right: 18px; }
.cube text { stroke: none; fill: #8a8f96; font-weight: 700; }
.cube-b { font-size: 11px; }
.cube-s { font-size: 6px; }
.navbar { position: absolute; top: 199px; right: 1px; width: 36px; height: 117px; border: 2px solid #bdbdbd; border-radius: 5px; background: #f4f4f4; display: flex; flex-direction: column; align-items: center; }
.navbar .caret { margin-top: 7px; border-top-color: #888; }
.navbar hr { width: 26px; border: 0; border-top: 1px solid #bbb; margin: 4px 0 7px; }
.navbar .caret + .nx { margin-top: 11px; }
.nx { align-self: flex-end; margin: 1px 3px 10px; }
.nx.low { margin-bottom: 0; }
.vscroll { background: #ededed; display: flex; flex-direction: column; align-items: center; padding: 8px 4px 6px 0; border-left: 1px solid #e2e2e2; }
.vscroll .thumb { width: 14px; height: 15px; margin: auto 0; }
.vcb { display: flex; align-items: center; gap: 5px; background: #f0f0f0; padding: 0 0 1px 24px; border-top: 1px solid #e5e5e5; }
.scale { margin-right: 14px; }
.hscroll { flex: 1; display: flex; align-items: center; padding: 0 8px 0 6px; background: #ececec; }
.hscroll .thumb { width: 15px; height: 15px; margin: 0 auto; }
.grip { background: #f0f0f0; display: grid; place-items: center; }

/* status bar */
.status { height: 25px; flex: none; border-top: 1px solid #888; background: linear-gradient(#e3e3e3, #c4c4c4); display: flex; align-items: center; }
.status p { flex: 0 1 998px; }
.ws { display: flex; align-items: stretch; height: 23px; gap: 3px; width: 500px; }
.sq { width: 23px; background: #cfcfcf; }
.req { width: 54px; background: #d3d3d3; gap: 5px; justify-content: flex-start; padding-left: 4px; }
.ws select { border: 1px solid #ccc; color: #777; opacity: 1; padding: 0 3px; appearance: none; background: conic-gradient(from 315deg at 50% 100%, #999 25%, transparent 0) no-repeat right 2px center / 8px 4px, #fff; }
.work-sel { width: 206px; }
.main-sel { width: 155px; }
.drag { margin-left: auto; display: flex; align-items: center; gap: 4px; }
.drag input[type=checkbox] { margin: 0; background: #fff; border-color: #333; }
.drag input[type=checkbox]:checked::before { color: #2a9a1c; }
.flt { margin: 0 67px 0 17px; gap: 1px; }
```
